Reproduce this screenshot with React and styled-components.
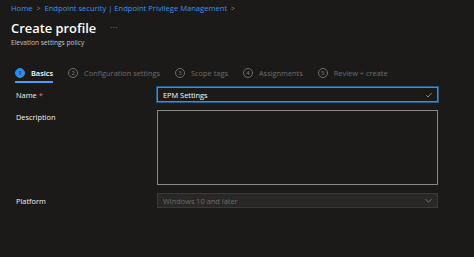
import styled, { createGlobalStyle } from "styled-components";

const GlobalStyle = createGlobalStyle`
  body {
    margin: 0;
    background: #1b1a19;
    font-family: "Segoe UI", "Open Sans", "Liberation Sans", sans-serif;
  }
`;

const steps = [
  "Basics",
  "Configuration settings",
  "Scope tags",
  "Assignments",
  "Review + create",
];

const Page = styled.div`
  width: 474px;
  height: 257px;
  box-sizing: border-box;
  padding: 2px 11px 0;
  background: #1b1a19;
  overflow: hidden;
`;

const Breadcrumb = styled.nav`
  display: flex;
  align-items: center;
  gap: 4px;
  height: 12px;
  font-size: 7.6px;
  color: #3f95e8;
  white-space: nowrap;
`;

const Sep = styled.span`
  color: #8a8886;
  font-size: 7px;
`;

const TitleRow = styled.div`
  display: flex;
  align-items: center;
  gap: 14px;
  margin-top: 4px;
  height: 20px;
`;

const Title = styled.h1`
  margin: 0;
  font-size: 12.9px;
  font-weight: 600;
  color: #ffffff;
`;

const More = styled.span`
  color: #a19f9d;
  font-size: 8px;
  letter-spacing: 0.5px;
  margin-top: -3px;
`;

const Subtitle = styled.div`
  font-size: 6.6px;
  color: #c8c6c4;
  margin-top: 0;
`;

const Tabs = styled.div`
  display: flex;
  align-items: center;
  gap: 15px;
  margin-top: 19px;
  padding-left: 4px;
`;

const Tab = styled.div`
  position: relative;
  display: flex;
  align-items: center;
  gap: 6px;
  height: 14px;
  font-size: 7.4px;
  font-weight: ${(p) => (p.$active ? 600 : 400)};
  color: ${(p) => (p.$active ? "#ffffff" : "#6e6d6b")};
  white-space: nowrap;

  &::after {
    content: "";
    display: ${(p) => (p.$active ? "block" : "none")};
    position: absolute;
    left: 0;
    right: 0;
    bottom: -3px;
    height: 2px;
    background: #479ef5;
  }
`;

const Step = styled.span`
  box-sizing: border-box;
  width: 10px;
  height: 10px;
  border-radius: 50%;
  display: flex;
  align-items: center;
  justify-content: center;
  font-size: 6px;
  font-weight: 600;
  background: ${(p) => (p.$active ? "#2b8ee8" : "transparent")};
  border: 1px solid ${(p) => (p.$active ? "#2b8ee8" : "#6e6d6b")};
  color: ${(p) => (p.$active ? "#1b1a19" : "#6e6d6b")};
`;

const Form = styled.div`
  display: grid;
  grid-template-columns: 141px 281px;
  row-gap: 8px;
  margin-top: 7px;
  padding-left: 5px;
  font-size: 7.4px;
`;

const Label = styled.label`
  color: #f3f2f1;
  padding-top: ${(p) => p.$top || "3px"};
`;

const Req = styled.span`
  color: #f1707b;
  margin-left: 2px;
`;

const Input = styled.div`
  box-sizing: border-box;
  height: 15px;
  display: flex;
  align-items: center;
  justify-content: space-between;
  padding: 0 4px 0 5px;
  border: 1px solid ${(p) => (p.$focused ? "#3b8fd8" : "#8a8886")};
  outline: ${(p) => (p.$focused ? "1px solid #1f5a8c" : "none")};
  background: ${(p) => (p.$disabled ? "#292827" : "#1b1a19")};
  border-color: ${(p) => (p.$disabled ? "#3b3a39" : undefined)};
  color: ${(p) => (p.$disabled ? "#6e6d6b" : "#ffffff")};
`;

const TextArea = styled.div`
  box-sizing: border-box;
  height: 75px;
  border: 1px solid #8a8886;
  background: #1b1a19;
`;

const Check = () => (
  <svg width="8" height="8" viewBox="0 0 16 16">
    <path d="M2.5 8.5l3.5 3.5 7.5-8" fill="none" stroke="#8cbf6a" strokeWidth="1.6" />
  </svg>
);

const Chevron = () => (
  <svg width="9" height="9" viewBox="0 0 16 16">
    <path d="M2.5 5.5l5.5 5.5 5.5-5.5" fill="none" stroke="#8a8886" strokeWidth="1.4" />
  </svg>
);

export default function App() {
  return (
    <Page>
      <GlobalStyle />
      <Breadcrumb>
        <span>Home</span>
        <Sep>&gt;</Sep>
        <span>Endpoint security | Endpoint Privilege Management</span>
        <Sep>&gt;</Sep>
      </Breadcrumb>
      <TitleRow>
        <Title>Create profile</Title>
        <More>···</More>
      </TitleRow>
      <Subtitle>Elevation settings policy</Subtitle>
      <Tabs>
        {steps.map((s, i) => (
          <Tab key={s} $active={i === 0}>
            <Step $active={i === 0}>{i + 1}</Step>
            {s}
          </Tab>
        ))}
      </Tabs>
      <Form>
        <Label>
          Name<Req>*</Req>
        </Label>
        <Input $focused>
          <span>EPM Settings</span>
          <Check />
        </Input>
        <Label $top="2px">Description</Label>
        <TextArea />
        <Label>Platform</Label>
        <Input $disabled>
          <span>Windows 10 and later</span>
          <Chevron />
        </Input>
      </Form>
    </Page>
  );
}
